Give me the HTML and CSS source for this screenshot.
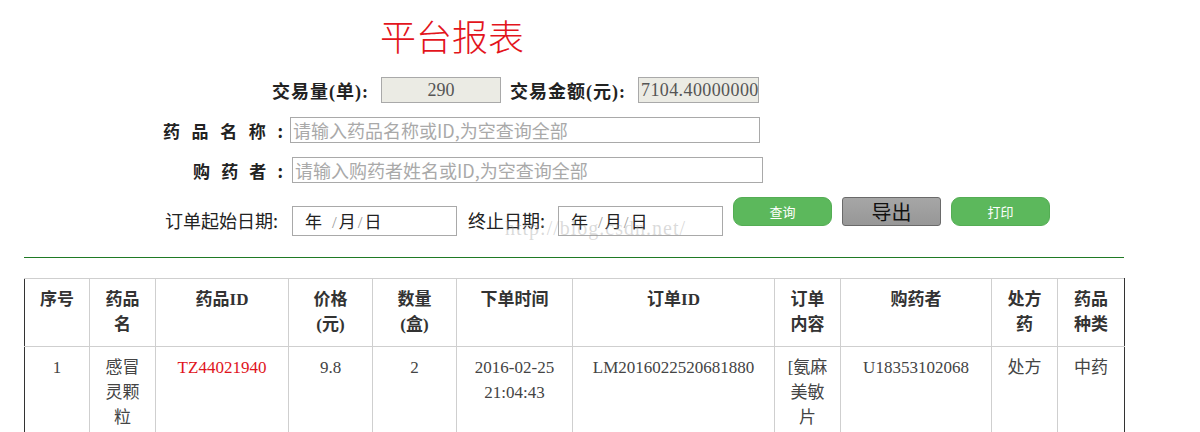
FILE: index.html
```html
<!DOCTYPE html>
<html lang="zh">
<head>
<meta charset="utf-8">
<title>平台报表</title>
<link rel="stylesheet" href="styles.css">
</head>
<body>
<div class="page">
  <h1 class="title">平台报表</h1>

  <div class="row row-sum">
    <span class="lbl-b lbl-count">交易量(单):</span>
    <div class="ro ro-count">290</div>
    <span class="lbl-b lbl-amount">交易金额(元):</span>
    <div class="ro ro-amount">7104.40000000</div>
  </div>

  <div class="row row-name">
    <span class="lbl-s lbl-s4"><i>药</i><i>品</i><i>名</i><i>称</i><i>:</i></span>
    <input class="txt txt-name" type="text" placeholder="请输入药品名称或ID,为空查询全部">
  </div>

  <div class="row row-buyer">
    <span class="lbl-s lbl-s3"><i>购</i><i>药</i><i>者</i><i>:</i></span>
    <input class="txt txt-buyer" type="text" placeholder="请输入购药者姓名或ID,为空查询全部">
  </div>

  <div class="row row-date">
    <span class="lbl-d lbl-start">订单起始日期:</span>
    <div class="date">年<span class="sl sl-first">/</span>月<span class="sl">/</span>日</div>
    <span class="lbl-d lbl-end">终止日期:</span>
    <div class="date">年<span class="sl sl-first">/</span>月<span class="sl">/</span>日</div>
    <button class="btn btn-green">查询</button>
    <button class="btn btn-gray">导出</button>
    <button class="btn btn-green">打印</button>
    <span class="watermark">http://blog.csdn.net/</span>
  </div>

  <hr class="rule">

  <table class="report">
    <colgroup>
      <col style="width:65px"><col style="width:66px"><col style="width:133px"><col style="width:84px"><col style="width:84px"><col style="width:116px"><col style="width:202px"><col style="width:66px"><col style="width:151px"><col style="width:66px"><col style="width:67px">
    </colgroup>
    <thead>
      <tr>
        <th>序号</th><th>药品名</th><th>药品ID</th><th>价格(元)</th><th>数量(盒)</th><th>下单时间</th><th>订单ID</th><th>订单内容</th><th>购药者</th><th>处方药</th><th>药品种类</th>
      </tr>
    </thead>
    <tbody>
      <tr>
        <td>1</td><td>感冒灵颗粒</td><td class="red">TZ44021940</td><td>9.8</td><td>2</td><td>2016-02-25 21:04:43</td><td>LM2016022520681880</td><td>[氨麻美敏片</td><td>U18353102068</td><td>处方</td><td>中药</td>
      </tr>
    </tbody>
  </table>
</div>
</body>
</html>
```

FILE: styles.css
```css
* { box-sizing: border-box; }
html, body { margin: 0; padding: 0; background: #fff; }
body {
  font-family: "Liberation Serif", "Noto Sans CJK SC", serif;
  color: #222;
  width: 1200px;
  height: 432px;
  overflow: hidden;
}
.page { position: relative; }

.title {
  margin: 0;
  height: 77px;
  padding: 12px 0 0 380px;
  font-family: "Noto Sans CJK SC", sans-serif;
  font-weight: 300;
  font-size: 36px;
  line-height: 46px;
  color: #e3141c;
}

.row { display: flex; align-items: center; }
.row-sum { height: 26px; padding-left: 272px; }
.lbl-b {
  font-family: "Liberation Serif", "Noto Sans CJK SC", serif;
  font-weight: bold;
  font-size: 18px;
  color: #222;
  letter-spacing: 1px;
  white-space: nowrap;
}
.lbl-count { width: 100px; margin-right: 9px; }
.lbl-amount { width: 120px; margin-left: 9px; margin-right: 8px; }
.ro {
  height: 26px;
  border: 1px solid #a9a9a9;
  background: #ebebe4;
  color: #555;
  font-size: 18px;
  line-height: 24px;
  font-family: "Liberation Serif", serif;
}
.ro-count { width: 120px; text-align: center; }
.ro-amount { width: 121px; padding-left: 2px; overflow: hidden; white-space: nowrap; letter-spacing: 0.4px; }

.row-name { margin-top: 14px; height: 26px; padding-left: 163px; }
.row-buyer { margin-top: 14px; height: 26px; padding-left: 193px; }
.lbl-s {
  display: flex;
  justify-content: space-between;
  font-family: "Noto Sans CJK SC", sans-serif;
  font-weight: bold;
  font-size: 17px;
  color: #222;
}
.lbl-s i { font-style: normal; }
.lbl-s4 { width: 120px; margin-right: 7px; }
.lbl-s3 { width: 90px; margin-right: 9px; }
.txt {
  height: 26px;
  border: 1px solid #a9a9a9;
  padding: 0 2px;
  font-family: "Noto Sans CJK SC", sans-serif;
  font-size: 18px;
  color: #333;
  outline: none;
}
.txt::placeholder { color: #a9a9a9; }
.txt-name { width: 470px; }
.txt-buyer { width: 471px; }

.row-date {
  position: relative;
  margin-top: 14px;
  height: 40px;
  padding-left: 165px;
  align-items: flex-start;
}
.lbl-d {
  margin-top: 11px;
  font-family: "Noto Sans CJK SC", sans-serif;
  font-size: 18px;
  line-height: 24px;
  color: #222;
  white-space: nowrap;
}
.lbl-start { width: 120px; margin-right: 7px; }
.lbl-end { width: 83px; margin-left: 11px; margin-right: 7px; }
.date {
  margin-top: 9px;
  width: 165px;
  height: 30px;
  border: 1px solid #a9a9a9;
  padding-left: 12px;
  font-family: "Noto Sans CJK SC", sans-serif;
  font-size: 17px;
  line-height: 28px;
  color: #222;
}
.sl {
  font-family: "Liberation Serif", serif;
  color: #9a9a9a;
  margin: 0 2px;
}
.sl-first { margin-left: 10px; }
.btn {
  width: 99px;
  height: 29px;
  margin-left: 10px;
  font-family: "Noto Sans CJK SC", sans-serif;
  cursor: pointer;
}
.btn-green {
  background: #5cb85c;
  border: 1px solid #54ad54;
  border-radius: 9px;
  color: #fff;
  font-size: 13px;
}
.btn-gray {
  background: linear-gradient(#a6a6a6, #979797);
  border: 1px solid #6a6a6a;
  border-radius: 3px;
  color: #111;
  font-size: 20px;
  line-height: 24px;
  padding: 0;
}
.watermark {
  position: absolute;
  left: 505px;
  top: 20px;
  font-family: "Liberation Serif", serif;
  font-size: 20px;
  color: rgba(150, 150, 150, 0.35);
  letter-spacing: 1px;
  pointer-events: none;
}

.rule {
  margin: 20px 0 0 24px;
  width: 1100px;
  height: 0;
  border: 0;
  border-top: 1px solid #1f7a24;
}

.report {
  margin: 20px 0 0 24px;
  width: 1100px;
  table-layout: fixed;
  border-collapse: collapse;
  border-left: 1px solid #333;
  border-right: 1px solid #333;
  font-family: "Liberation Serif", "Noto Sans CJK SC", serif;
  font-size: 17px;
  line-height: 25px;
}
.report th, .report td {
  border: 1px solid #cfcfcf;
  text-align: center;
  vertical-align: top;
  padding: 8px 12px;
  word-break: break-all;
}
.report th:first-child, .report td:first-child { border-left: 1px solid #333; }
.report th:last-child, .report td:last-child { border-right: 1px solid #333; }
.report th {
  font-weight: bold;
  color: #333;
  padding-top: 8px;
  padding-bottom: 9px;
}
.report td {
  color: #444;
  padding-top: 8px;
}
.report td:nth-child(3), .report td:nth-child(7), .report td:nth-child(9), .report th:nth-child(3), .report th:nth-child(7), .report th:nth-child(9) { padding-left: 4px; padding-right: 4px; }
.report .red { color: #e0141c; }
```
